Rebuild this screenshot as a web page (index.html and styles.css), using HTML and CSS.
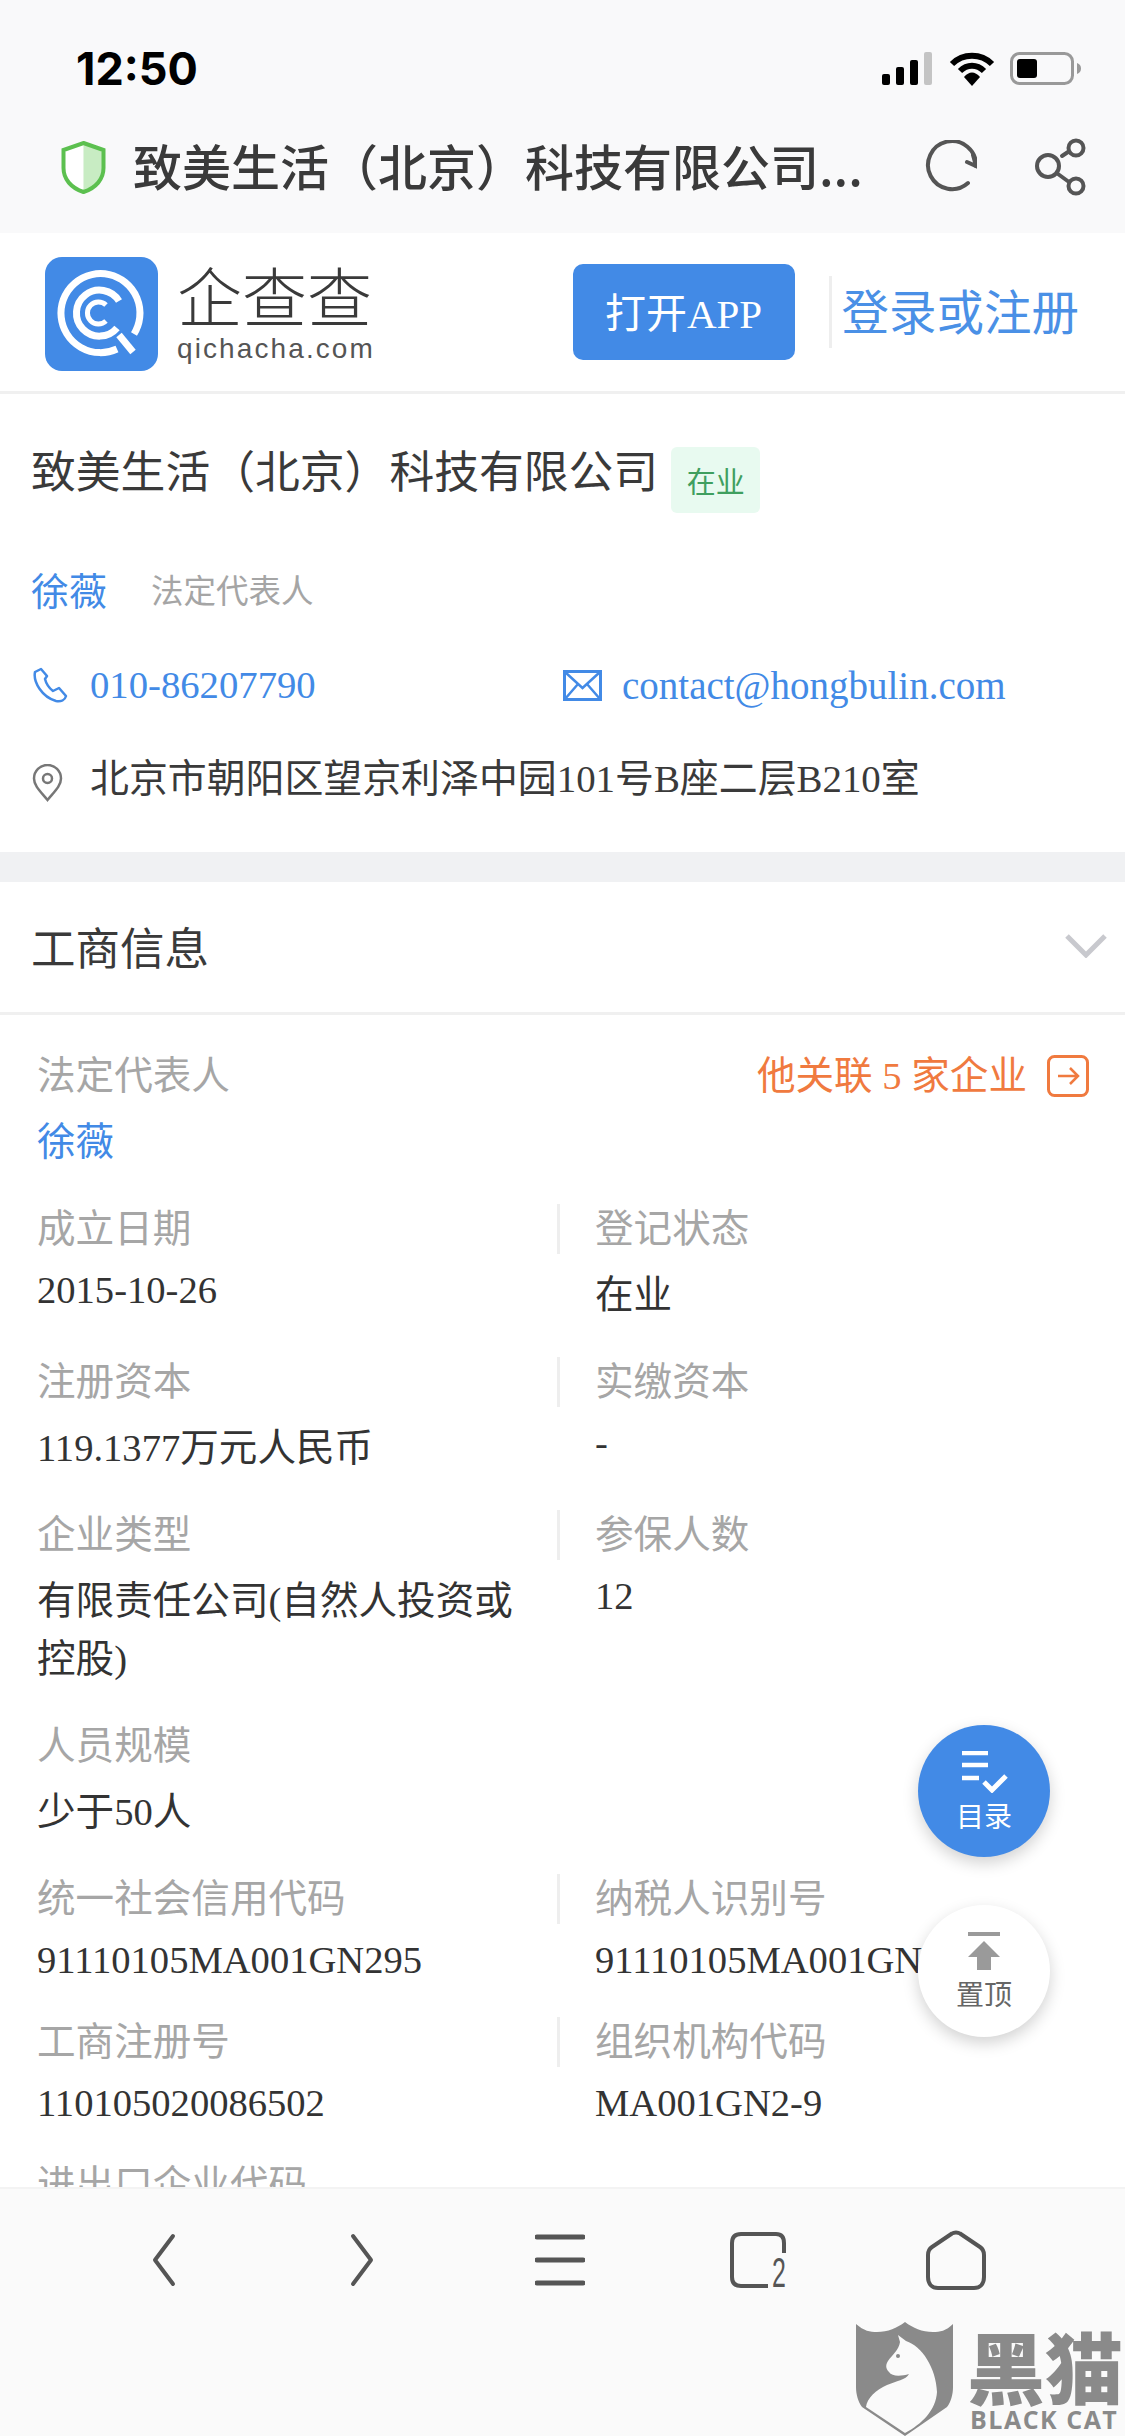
FILE: index.html
```html
<!DOCTYPE html>
<html lang="zh-CN">
<head>
    <meta charset="UTF-8">
    <meta name="viewport" content="width=device-width, initial-scale=1.0">
    <title>致美生活（北京）科技有限公司</title>
    <link rel="stylesheet" href="styles.css">
</head>
<body>
    <div class="phone">
        <div class="top_bar">
            <div class="status_row">
                <span class="clock">12:50</span>
                <div class="status_icons">
                    <svg width="52" height="33" viewBox="0 0 52 33">
                        <rect x="0" y="22" width="8" height="11" rx="2" fill="#000"/>
                        <rect x="14" y="15" width="8" height="18" rx="2" fill="#000"/>
                        <rect x="28" y="8" width="8" height="25" rx="2" fill="#000"/>
                        <rect x="42" y="0" width="8" height="33" rx="2" fill="#c4c4c4"/>
                    </svg>
                    <svg width="46" height="34" viewBox="0 0 46 34">
                        <path d="M3 12 C14 1 32 1 43 12" fill="none" stroke="#000" stroke-width="6"/>
                        <path d="M11 19 C18 12 28 12 35 19" fill="none" stroke="#000" stroke-width="6"/>
                        <path d="M15 25 C20 19 26 19 31 25 L23 34 Z" fill="#000"/>
                    </svg>
                    <svg width="71" height="33" viewBox="0 0 71 33">
                        <rect x="1.500" y="1.500" width="61" height="30" rx="8" fill="none" stroke="#999" stroke-width="3"/>
                        <rect x="7" y="7" width="20" height="19" rx="3" fill="#000"/>
                        <path d="M67 11 C70 12 71 14 71 16.500 C71 19 70 21 67 22 Z" fill="#999"/>
                    </svg>
                </div>
            </div>
            <div class="browser_row">
                <svg class="shield" width="45" height="53" viewBox="0 0 45 53">
                    <path d="M22.500 2 L22.500 51 C10 47 2.500 38 2.500 27 L2.500 9 Z" fill="#fff"/>
                    <path d="M22.500 2 L22.500 51 C35 47 42.500 38 42.500 27 L42.500 9 Z" fill="#c8ecc3"/>
                    <path d="M22.500 2 L42.500 9 L42.500 27 C42.500 38 35 47 22.500 51 C10 47 2.500 38 2.500 27 L2.500 9 Z" fill="none" stroke="#5cc04f" stroke-width="4"/>
                </svg>
                <div class="browser_title">致美生活（北京）科技有限公司...</div>
                <svg class="reload" width="52" height="54" viewBox="0 0 52 54">
                    <path d="M43 43 A24 24 0 1 1 51 26" fill="none" stroke="#555" stroke-width="4" stroke-linecap="round"/>
                    <path d="M42 22 L51 26 L48 15" fill="none" stroke="#555" stroke-width="4" stroke-linecap="round"/>
                </svg>
                <svg class="share" width="52" height="58" viewBox="0 0 52 58">
                    <circle cx="13" cy="28" r="11" fill="none" stroke="#555" stroke-width="4"/>
                    <circle cx="41" cy="10" r="7.500" fill="none" stroke="#555" stroke-width="4"/>
                    <circle cx="41" cy="48" r="7.500" fill="none" stroke="#555" stroke-width="4"/>
                    <path d="M27 18 L33 14 M23 36 L34 44" fill="none" stroke="#555" stroke-width="4" stroke-linecap="round"/>
                </svg>
            </div>
        </div>

        <div class="site_header">
            <svg class="logo_icon" width="113" height="114" viewBox="0 0 113 114">
                <rect width="113" height="114" rx="17" fill="#428ae6"/>
                <path d="M89 77 A39.500 39.500 0 1 0 72 92" fill="none" stroke="#fff" stroke-width="7"/>
                <path d="M74 78 L88 95" fill="none" stroke="#fff" stroke-width="7"/>
                <path d="M74 44 A23 23 0 1 0 72 71" fill="none" stroke="#fff" stroke-width="7"/>
                <path d="M61 48 A11 11 0 1 0 61 64" fill="none" stroke="#fff" stroke-width="5"/>
            </svg>
            <div class="logo_text">
                <div class="logo_name">企查查</div>
                <div class="logo_domain">qichacha.com</div>
            </div>
            <a class="open_app">打开APP</a>
            <a class="login_link">登录或注册</a>
        </div>

        <div class="page_body">
            <div class="company">
                <div class="company_title">
                    <h1>致美生活（北京）科技有限公司</h1>
                    <span class="badge">在业</span>
                </div>
                <div class="legal_row">
                    <a class="blue_name">徐薇</a>
                    <span class="legal_tag">法定代表人</span>
                </div>
                <div class="contact_row">
                    <div class="phone_item">
                        <svg width="36" height="36" viewBox="0 0 36 36">
                            <path d="M9 2 L3 5 C1 15 10 30 24 34 C29 35 33 33 34 29 L27 21 L21 24 C17 21 14 16 13 12 L15 9 Z" fill="none" stroke="#428ae6" stroke-width="2.500" stroke-linejoin="round"/>
                        </svg>
                        <span>010-86207790</span>
                    </div>
                    <div class="email_item">
                        <svg width="39" height="31" viewBox="0 0 39 31">
                            <rect x="1.500" y="1.500" width="36" height="28" fill="none" stroke="#428ae6" stroke-width="3"/>
                            <path d="M2 2 L19.500 18 L37 2 M2 29 L15 14 M37 29 L24 14" fill="none" stroke="#428ae6" stroke-width="2.500"/>
                        </svg>
                        <span>contact@hongbulin.com</span>
                    </div>
                </div>
                <div class="address_row">
                    <svg class="pin" width="31" height="38" viewBox="0 0 31 38">
                        <path d="M15.500 36 C9 28 2 22 2 14.500 A13.500 13.500 0 0 1 29 14.500 C29 22 22 28 15.500 36 Z" fill="none" stroke="#777" stroke-width="2.500"/>
                        <circle cx="15.500" cy="14.500" r="4.500" fill="none" stroke="#777" stroke-width="2.500"/>
                    </svg>
                    <span>北京市朝阳区望京利泽中园101号B座二层B210室</span>
                </div>
            </div>

            <div class="section_head">
                <h2>工商信息</h2>
                <svg width="42" height="24" viewBox="0 0 42 24">
                    <path d="M2 2 L21 21 L40 2" fill="none" stroke="#c8c9ce" stroke-width="5"/>
                </svg>
            </div>

            <div class="details">
                <div class="detail_top">
                    <div class="label">法定代表人</div>
                    <a class="related">
                        <span>他关联 5 家企业</span>
                        <svg width="42" height="42" viewBox="0 0 42 42">
                            <rect x="1.500" y="1.500" width="39" height="39" rx="6" fill="none" stroke="#f07a3f" stroke-width="3"/>
                            <path d="M11 21 L30 21 M23 13 L31 21 L23 29" fill="none" stroke="#f07a3f" stroke-width="2.500"/>
                        </svg>
                    </a>
                </div>
                <div class="value cn blue_value">徐薇</div>

                <div class="info_grid">
                    <div class="cell"><div class="label">成立日期</div><div class="value">2015-10-26</div></div>
                    <div class="cell right"><div class="label">登记状态</div><div class="value cn">在业</div></div>
                    <div class="cell"><div class="label">注册资本</div><div class="value cn">119.1377万元人民币</div></div>
                    <div class="cell right"><div class="label">实缴资本</div><div class="value">-</div></div>
                    <div class="cell"><div class="label">企业类型</div><div class="value cn">有限责任公司(自然人投资或控股)</div></div>
                    <div class="cell right"><div class="label">参保人数</div><div class="value">12</div></div>
                    <div class="cell wide"><div class="label">人员规模</div><div class="value cn">少于50人</div></div>
                    <div class="cell"><div class="label">统一社会信用代码</div><div class="value">91110105MA001GN295</div></div>
                    <div class="cell right"><div class="label">纳税人识别号</div><div class="value">91110105MA001GN295</div></div>
                    <div class="cell"><div class="label">工商注册号</div><div class="value">110105020086502</div></div>
                    <div class="cell right"><div class="label">组织机构代码</div><div class="value">MA001GN2-9</div></div>
                    <div class="cell wide"><div class="label">进出口企业代码</div></div>
                </div>
            </div>

            <div class="float_btn float_toc">
                <svg width="50" height="42" viewBox="0 0 50 42">
                    <path d="M3 2 L29 2 M3 14 L29 14 M3 27 L20 27" fill="none" stroke="#fff" stroke-width="4.500"/>
                    <path d="M25 31 L33 39 L47 25" fill="none" stroke="#fff" stroke-width="5"/>
                </svg>
                <span>目录</span>
            </div>
            <div class="float_btn float_top">
                <svg width="34" height="39" viewBox="0 0 34 39">
                    <path d="M1 0 H33 V4 H1 Z M17 9 L33 25 H24 V38 H10 V25 H1 Z" fill="#9a9a9a"/>
                </svg>
                <span>置顶</span>
            </div>
        </div>

        <div class="tool_bar">
            <div class="tool_item">
                <svg width="24" height="54" viewBox="0 0 24 54">
                    <path d="M21 3 L3 27 L21 51" fill="none" stroke="#555" stroke-width="4" stroke-linecap="round" stroke-linejoin="round"/>
                </svg>
            </div>
            <div class="tool_item">
                <svg width="24" height="54" viewBox="0 0 24 54">
                    <path d="M3 3 L21 27 L3 51" fill="none" stroke="#555" stroke-width="4" stroke-linecap="round" stroke-linejoin="round"/>
                </svg>
            </div>
            <div class="tool_item">
                <svg width="50" height="52" viewBox="0 0 50 52">
                    <path d="M2 3 H48 M2 26 H48 M2 49 H48" fill="none" stroke="#555" stroke-width="5" stroke-linecap="round"/>
                </svg>
            </div>
            <div class="tool_item">
                <div class="tabs_icon">
                    <svg width="56" height="56" viewBox="0 0 56 56">
                        <path d="M54 21 V11 C54 5 51 2 46 2 H11 C5 2 2 5 2 11 V45 C2 51 5 54 11 54 H38" fill="none" stroke="#555" stroke-width="4"/>
                    </svg>
                    <span class="tabs_count">2</span>
                </div>
            </div>
            <div class="tool_item">
                <svg width="60" height="60" viewBox="0 0 60 60">
                    <path d="M26 3.500 C28 2 32 2 34 3.500 L54 17 C57 19 58 22 58 25 V47 C58 54 54 58 48 58 H12 C6 58 2 54 2 47 V25 C2 22 3 19 6 17 Z" fill="none" stroke="#555" stroke-width="4" stroke-linejoin="round"/>
                </svg>
            </div>
        </div>

        <div class="watermark">
            <svg width="97" height="114" viewBox="0 0 97 114">
                <path d="M0 2 C8 9 14 10 21 10 C32 10 41 6 49 0 C57 6 66 10 77 10 C84 10 90 9 97 2 V65 C97 72 95 80 91 85 L49 114 L6 85 C2 80 0 72 0 65 Z" fill="#8a8a8a"/>
                <path d="M42 13 L50 19 C66 24 80 46 81 70 C80 88 66 102 49 111 L10 85 C11 76 20 68 31 63 C40 59 50 58 53 52 C46 54 36 55 33 50 C29 46 30 42 32 39 C36 33 43 28 44 20 Z" fill="#fafafa"/>
                <circle cx="42" cy="34" r="2" fill="#8a8a8a"/>
            </svg>
            <div class="mark_text">
                <div class="mark_cn">黑猫</div>
                <div class="mark_en">BLACK CAT</div>
            </div>
        </div>
    </div>
</body>
</html>
```
FILE: styles.css
```css
* {
    box-sizing: border-box;
}

body {
    margin: 0;
    font-family: "Liberation Serif", "Noto Sans CJK SC", serif;
    color: #333;
    background-color: white;
}

a {
    text-decoration: none;
}

h1, h2 {
    margin: 0;
    font-weight: normal;
}

.phone {
    position: relative;
    width: 1125px;
    height: 2436px;
    display: flex;
    flex-direction: column;
    overflow: hidden;
}

/* status bar + browser address row */
.top_bar {
    height: 233px;
    flex-shrink: 0;
    background-color: #f9f9fa;
}

.status_row {
    display: flex;
    justify-content: space-between;
    align-items: center;
    padding: 52px 44px 0 76px;
    height: 85px;
}

.clock {
    font-family: Inter, "Liberation Sans", sans-serif;
    font-size: 45px;
    font-weight: 700;
    color: black;
    line-height: 33px;
}

.status_icons {
    display: flex;
    align-items: center;
    gap: 15px;
}

.browser_row {
    display: flex;
    align-items: center;
    height: 60px;
    margin-top: 52px;
    padding-left: 61px;
}

.browser_title {
    width: 792px;
    margin: -4px 0 0 27px;
    font-family: "Noto Sans CJK SC", sans-serif;
    font-size: 49px;
    font-weight: 500;
    line-height: 60px;
    color: #3a3a3a;
    white-space: nowrap;
}

.share {
    margin-left: 58px;
}

/* site header */
.site_header {
    height: 161px;
    flex-shrink: 0;
    display: flex;
    align-items: center;
    padding: 0 46px 0 45px;
    border-bottom: 3px solid #f0f0f0;
}

.logo_icon {
    margin-top: 3px;
}

.logo_text {
    margin-left: 19px;
    margin-top: 1px;
    width: 200px;
}

.logo_name {
    margin-bottom: 3px;
    font-family: "Noto Sans CJK SC", sans-serif;
    font-size: 65px;
    font-weight: 300;
    line-height: 70px;
    color: #3a3a3a;
}

.logo_domain {
    font-family: "Liberation Sans", sans-serif;
    font-size: 28px;
    letter-spacing: 2.100px;
    line-height: 34px;
    color: #555;
}

.open_app {
    margin-left: auto;
    width: 222px;
    height: 96px;
    display: flex;
    justify-content: center;
    align-items: center;
    padding-bottom: 5px;
    background-color: #428ae6;
    border-radius: 10px;
    color: white;
    font-size: 41px;
}

.login_link {
    margin-left: 34px;
    padding: 0 0 5px 10px;
    border-left: 3px solid #eee;
    height: 72px;
    display: flex;
    align-items: center;
    color: #4a90e6;
    font-size: 47.500px;
    white-space: nowrap;
}

.page_body {
    position: relative;
    flex: 1;
    overflow: hidden;
}

/* company card */
.company {
    padding: 53px 31px 52px;
    border-bottom: 30px solid #f0f1f3;
}

.company_title {
    display: flex;
    align-items: flex-start;
    gap: 13px;
}

.company_title h1 {
    font-size: 44.800px;
    line-height: 52px;
    color: #3a3a3a;
    white-space: nowrap;
}

.badge {
    width: 89px;
    height: 66px;
    display: flex;
    justify-content: center;
    align-items: center;
    background-color: #e8faf0;
    border-radius: 6px;
    color: #3f9f5f;
    font-size: 29px;
}

.legal_row {
    display: flex;
    align-items: center;
    height: 50px;
    margin-top: 50px;
}

.blue_name {
    color: #428ae6;
    font-size: 38px;
}

.legal_tag {
    margin-left: 44px;
    color: #a5a5a5;
    font-size: 32.500px;
}

.contact_row {
    display: flex;
    height: 50px;
    margin-top: 47px;
    padding-left: 1px;
    color: #428ae6;
    font-size: 38.700px;
}

.phone_item, .email_item {
    display: flex;
    align-items: center;
}

.phone_item {
    width: 531px;
    gap: 22px;
}

.email_item {
    gap: 20px;
    font-size: 39px;
}

.address_row {
    display: flex;
    align-items: center;
    gap: 27px;
    height: 50px;
    margin-top: 40px;
    padding-left: 1px;
    font-size: 38.900px;
    color: #3a3a3a;
}

.pin {
    margin-top: 16px;
}

/* section title */
.section_head {
    height: 133px;
    display: flex;
    justify-content: space-between;
    align-items: center;
    padding: 0 18px 3px 31px;
    border-bottom: 3px solid #f0f0f0;
}

.section_head h2 {
    font-size: 44.500px;
    color: #3a3a3a;
}

.details {
    padding: 36px 0 0 37px;
}

.detail_top {
    display: flex;
    justify-content: space-between;
    align-items: center;
    height: 50px;
    padding-right: 36px;
}

.label {
    font-size: 38.600px;
    line-height: 50px;
    color: #a6a6a6;
    white-space: nowrap;
}

.value {
    margin-top: 12px;
    font-size: 38.600px;
    line-height: 48px;
    color: #333;
}

.value.cn {
    line-height: 58px;
}

.value.blue_value {
    color: #428ae6;
    margin-bottom: 33px;
}

.related {
    display: flex;
    align-items: center;
    gap: 20px;
    color: #f07a3f;
    font-size: 38.600px;
    white-space: nowrap;
}

.related span {
    margin-bottom: 8px;
}

.info_grid {
    display: grid;
    grid-template-columns: 520px 1fr;
    align-items: start;
}

.cell {
    padding: 0 30px 33px 0;
}

.cell.right {
    padding-left: 38px;
}

.cell.wide {
    grid-column: 1 / 3;
}

.cell.right .label {
    border-left: 3px solid #eee;
    margin-left: -38px;
    padding-left: 35px;
}

/* floating round buttons */
.float_btn {
    position: absolute;
    right: 75px;
    width: 132px;
    height: 132px;
    display: flex;
    flex-direction: column;
    align-items: center;
    justify-content: center;
    gap: 5px;
    border-radius: 50%;
    font-family: "Noto Sans CJK SC", sans-serif;
    font-size: 28px;
    line-height: 34px;
    box-shadow: 0 6px 16px rgba(0, 0, 0, 0.18);
}

.float_toc {
    top: 1331px;
    background-color: #428ae6;
    color: white;
}

.float_top {
    top: 1511px;
    background-color: white;
    color: #666;
}

/* browser bottom toolbar */
.tool_bar {
    height: 249px;
    flex-shrink: 0;
    display: flex;
    align-items: flex-start;
    padding: 41px 0 0 65px;
    background-color: #fafafa;
    border-top: 2px solid #f3f3f3;
}

.tool_item {
    width: 198px;
    height: 60px;
    display: flex;
    justify-content: center;
    align-items: center;
}

.tabs_icon {
    position: relative;
    width: 56px;
    height: 56px;
}

.tabs_count {
    position: absolute;
    right: 0;
    bottom: 0;
    font-family: "Liberation Sans", sans-serif;
    font-size: 43px;
    line-height: 31px;
    color: #555;
    transform: scaleX(0.58);
    transform-origin: right bottom;
}

.watermark {
    position: absolute;
    left: 856px;
    top: 2322px;
    display: flex;
    gap: 14px;
}

.mark_text {
    padding-top: 2px;
    width: 160px;
}

.mark_cn {
    font-family: "Noto Sans CJK SC", sans-serif;
    font-size: 78px;
    font-weight: 900;
    line-height: 82px;
    color: #8a8a8a;
    white-space: nowrap;
}

.mark_en {
    margin-top: 1px;
    padding-left: 3px;
    font-family: "Open Sans", sans-serif;
    font-size: 25px;
    font-weight: 700;
    line-height: 24px;
    letter-spacing: 1.500px;
    color: #8a8a8a;
    white-space: nowrap;
}
```
